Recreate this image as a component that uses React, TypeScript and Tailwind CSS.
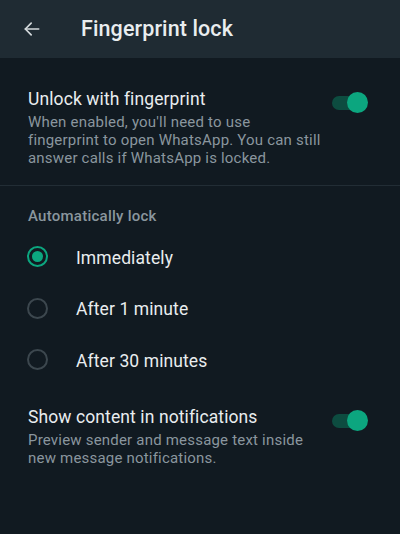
import React from "react";

function Toggle() {
  return (
    <div className="relative w-[36px] h-[22px] flex items-center">
      <div className="w-[32px] h-[14px] rounded-full bg-[#0d4c40]" />
      <div className="absolute right-0 top-0 w-[21px] h-[21px] rounded-full bg-[#0ca67f]" />
    </div>
  );
}

function Radio({ checked }: { checked?: boolean }) {
  return (
    <div
      className={
        "w-[21px] h-[21px] rounded-full border-2 flex items-center justify-center " +
        (checked ? "border-[#0ca67f]" : "border-[#3c474e]")
      }
    >
      {checked && <div className="w-[11px] h-[11px] rounded-full bg-[#0ca67f]" />}
    </div>
  );
}

export default function App() {
  const options = [
    { label: "Immediately", checked: true },
    { label: "After 1 minute" },
    { label: "After 30 minutes" },
  ];
  return (
    <div
      className="w-[400px] h-[534px] bg-[#111a21] flex flex-col overflow-hidden"
      style={{ fontFamily: "Roboto, 'Noto Sans', sans-serif" }}
    >
      <div className="h-[58px] bg-[#1f2b33] flex items-center shrink-0">
        <svg
          className="ml-[22px]"
          width="20"
          height="20"
          viewBox="0 0 24 24"
          fill="none"
          stroke="#d4dadd"
          strokeWidth="2"
          strokeLinecap="round"
          strokeLinejoin="round"
        >
          <path d="M20 12H4" />
          <path d="M11 5l-7 7 7 7" />
        </svg>
        <div className="ml-[39px] text-[21.5px] font-medium text-[#e9edef] tracking-[0.1px]">
          Fingerprint lock
        </div>
      </div>

      <div className="flex items-start pt-[30px] pb-[18px] pl-[28px] pr-[32px] border-b border-[#222d35]">
        <div className="flex-1 flex flex-col">
          <div className="text-[17.5px] leading-[22px] tracking-[0.1px] text-[#e9edef]">Unlock with fingerprint</div>
          <div className="mt-[3px] text-[15px] leading-[18px] tracking-[0.2px] text-[#8a969e] w-[296px]">
            When enabled, you'll need to use fingerprint to open WhatsApp. You can still answer calls if WhatsApp is locked.
          </div>
        </div>
        <div className="mt-[4px]">
          <Toggle />
        </div>
      </div>

      <div className="pl-[28px] pt-[21px] text-[15px] leading-[18px] tracking-[0.25px] font-medium text-[#8a969e]">
        Automatically lock
      </div>

      <div className="mt-[6px] flex flex-col">
        {options.map((o) => (
          <div key={o.label} className="h-[51.5px] flex items-center pl-[27px]">
            <Radio checked={o.checked} />
            <div className="ml-[28px] text-[17.5px] leading-[22px] tracking-[0.1px] text-[#e9edef] mt-[2px]">{o.label}</div>
          </div>
        ))}
      </div>

      <div className="flex items-start pt-[20px] pl-[28px] pr-[32px]">
        <div className="flex-1 flex flex-col">
          <div className="text-[17.5px] leading-[22px] tracking-[0.1px] text-[#e9edef]">Show content in notifications</div>
          <div className="mt-[3px] text-[15px] leading-[18px] tracking-[0.2px] text-[#8a969e] w-[296px]">
            Preview sender and message text inside new message notifications.
          </div>
        </div>
        <div className="mt-[4px]">
          <Toggle />
        </div>
      </div>
    </div>
  );
}
